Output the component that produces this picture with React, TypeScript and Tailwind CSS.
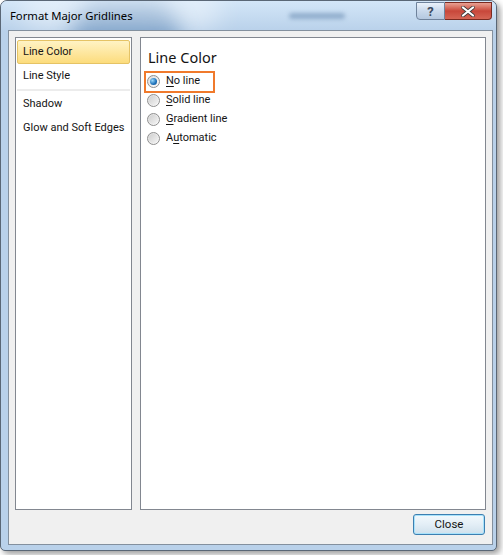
import React from 'react'

const font = { fontFamily: 'Roboto, "Noto Sans", sans-serif' }
const captionFont = { fontFamily: '"Segoe UI", "Noto Sans", sans-serif' }

const navItems = ['Line Color', 'Line Style', 'Shadow', 'Glow and Soft Edges']

function Radio({ checked }: { checked?: boolean }) {
  return (
    <span className="flex h-[13px] w-[13px] shrink-0 items-center justify-center rounded-full border border-[#8f8f8f] bg-gradient-to-br from-[#dcdcdc] to-[#fbfbfb]">
      <span
        className={
          checked
            ? 'h-[7px] w-[7px] rounded-full bg-[radial-gradient(circle_at_35%_35%,#9ad8fb,#1a6fb8_60%,#0d4b8a)]'
            : 'h-[9px] w-[9px] rounded-full bg-gradient-to-br from-[#cfcfcf] to-[#f4f4f4]'
        }
      />
    </span>
  )
}

function Underlined({ text, at }: { text: string; at: number }) {
  return (
    <>
      {text.slice(0, at)}
      <span className="underline underline-offset-2">{text[at]}</span>
      {text.slice(at + 1)}
    </>
  )
}

export default function App() {
  const options = [
    { label: 'No line', key: 0, checked: true },
    { label: 'Solid line', key: 0 },
    { label: 'Gradient line', key: 0 },
    { label: 'Automatic', key: 1 },
  ]

  return (
    <div className="h-[555px] w-[503px] overflow-hidden bg-white text-[11px] text-[#141414]" style={font}>
      <div className="relative flex h-[551px] w-[497px] flex-col overflow-hidden rounded-t-[7px] rounded-b-[5px] border border-[#5a6776] bg-[#b9d1ea] pt-[29px] pr-[3px] pb-[5px] pl-[7px] shadow-[3px_3px_6px_rgba(0,0,0,0.4)]">
        {/* title bar glass */}
        <div className="absolute inset-x-0 top-0 h-[30px] bg-gradient-to-b from-[#d3e6f8] to-[#b9d1ea]" />
        <div className="absolute left-[70px] top-[4px] h-[60px] w-[110px] rounded-full bg-[#4f7fb3] opacity-70 blur-[10px]" />
        <div className="absolute left-[20px] top-[-10px] h-[40px] w-[200px] rounded-full bg-white opacity-40 blur-[12px]" />
        <div className="absolute left-[288px] top-[12px] h-[6px] w-[56px] rounded-full bg-[#6d8fb4] opacity-60 blur-[2px]" />
        <div className="absolute left-[9px] top-[7px] whitespace-nowrap text-[11.3px] text-black" style={captionFont}>
          Format Major Gridlines
        </div>

        {/* caption buttons */}
        <div className="absolute right-[4px] top-[1px] flex h-[18px]">
          <div className="flex w-[29px] items-center justify-center rounded-bl-[4px] border border-[#6f839c] bg-gradient-to-b from-[#eaf2fb] via-[#c9d9ec] to-[#b4c8e0] text-[13px] font-bold leading-none text-[#3c4c60]">
            ?
          </div>
          <div className="flex w-[47px] items-center justify-center rounded-br-[4px] border border-l-0 border-[#7a2a20] bg-gradient-to-b from-[#e8a093] via-[#c8473a] to-[#d56555]">
            <svg width="14" height="11" viewBox="0 0 14 11">
              <path d="M2 1.5 L12 9.5 M12 1.5 L2 9.5" stroke="#3a3a3a" strokeWidth="3.6" strokeLinecap="round" />
              <path d="M2 1.5 L12 9.5 M12 1.5 L2 9.5" stroke="#ffffff" strokeWidth="2.2" strokeLinecap="round" />
            </svg>
          </div>
        </div>

        {/* client area */}
        <div className="relative flex flex-1 flex-col border border-[#83909e] bg-[#f0f0f0] px-[6px] pt-[6px] pb-[8px]">
          <div className="flex h-[473px] gap-[8px]">
            <div className="w-[117px] border border-[#828790] bg-white px-px pt-[2px]">
              {navItems.map((item, i) => (
                <React.Fragment key={item}>
                  <div
                    className={`flex h-[24px] items-center whitespace-nowrap pl-[5px] ${
                      i === 0
                        ? 'rounded-[2px] border border-[#e5c365] bg-gradient-to-b from-[#fff3c4] to-[#fcdc7c]'
                        : 'border border-transparent'
                    }`}
                  >
                    {item}
                  </div>
                  {i === 1 && <div className="my-[1px] h-[2px] bg-[#ececec]" />}
                </React.Fragment>
              ))}
            </div>
            <div className="flex-1 border border-[#828790] bg-white pl-[3px] pt-[9px]">
              <div className="pl-[4px] text-[14.5px] leading-[20px]" style={captionFont}>
                Line Color
              </div>
              <div className="mt-[5px] flex flex-col">
                {options.map((o) => (
                  <div key={o.label} className="flex h-[19px] w-max items-center">
                    <div
                      className={`flex h-[22px] items-center gap-[6px] pr-[13px] pl-px ${
                        o.checked ? 'border-2 border-[#f07a2c]' : 'border-2 border-transparent'
                      }`}
                    >
                      <Radio checked={o.checked} />
                      <span className="whitespace-nowrap">
                        <Underlined text={o.label} at={o.key} />
                      </span>
                    </div>
                  </div>
                ))}
              </div>
            </div>
          </div>
          <div className="mt-[4px] flex justify-end pr-px">
            <button className="h-[21px] w-[72px] rounded-[3px] border border-[#3c7fb1] bg-gradient-to-b from-[#f2f9fd] via-[#e3eef6] to-[#cfe0ec] text-[11.5px] shadow-[inset_0_0_0_1px_#a8e2fb]">
              Close
            </button>
          </div>
        </div>
      </div>
    </div>
  )
}
